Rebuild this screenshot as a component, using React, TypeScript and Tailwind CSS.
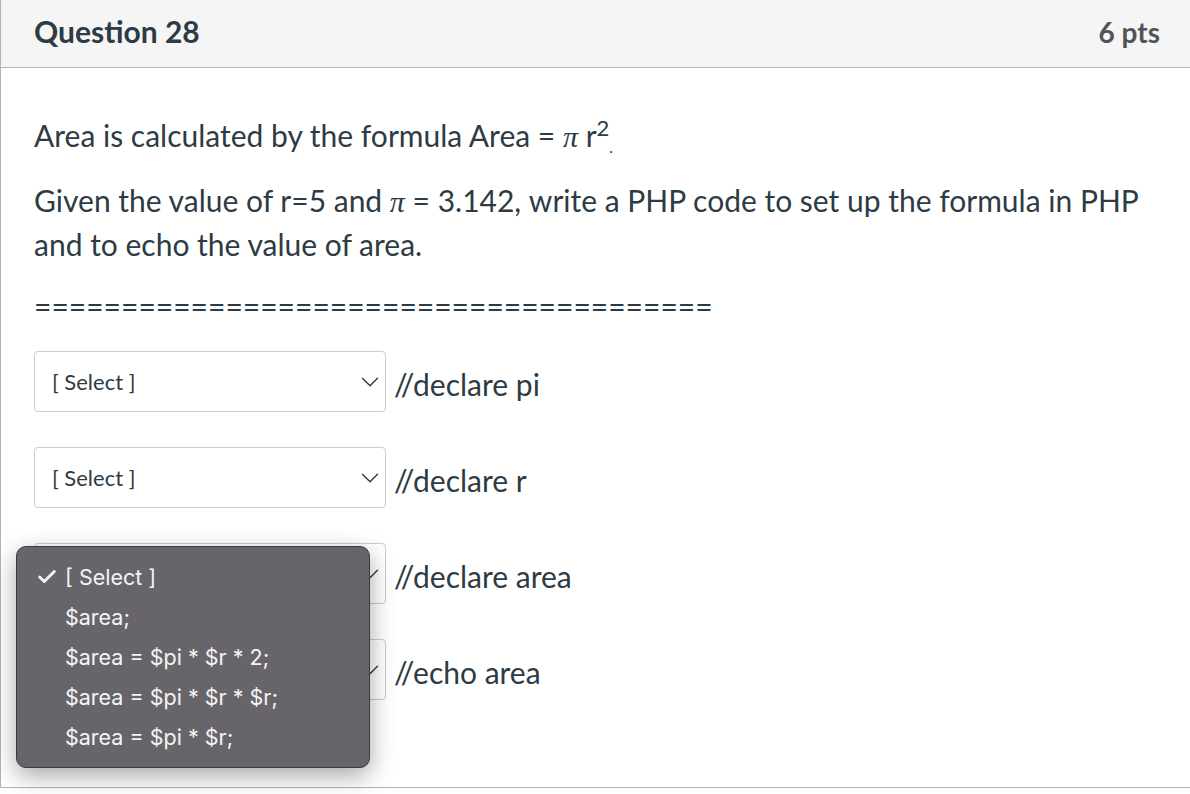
import { Check, ChevronDown } from 'lucide-react'

const ROWS = [
  { label: '//declare pi' },
  { label: '//declare r' },
  { label: '//declare area' },
  { label: '//echo area' },
]

const OPTIONS = ['[ Select ]', '$area;', '$area = $pi * $r * 2;', '$area = $pi * $r * $r;', '$area = $pi * $r;']

function SelectBox() {
  return (
    <div className="flex h-[61px] w-[352px] shrink-0 items-center justify-between rounded-[4px] border border-[#c7cdd1] bg-white pl-[17px]">
      <span className="text-[22px] leading-none text-[#2d3b45]">[ Select ]</span>
      <ChevronDown size={30} strokeWidth={1.1} className="text-[#2d3b45]" />
    </div>
  )
}

function OptionMenu() {
  return (
    <div className="absolute left-[16px] top-[546px] w-[354px] rounded-[10px] border border-[#3c3a3f] bg-[#67646a] py-[10px] shadow-[0_8px_24px_rgba(0,0,0,0.35)]">
      {OPTIONS.map((opt, i) => (
        <div
          key={opt}
          className="flex h-[40px] items-center text-[21.5px] text-[#f4f4f6] [font-family:Inter,'Liberation_Sans',sans-serif]"
        >
          <span className="flex w-[48px] justify-end pr-[7px]">
            {i === 0 && <Check size={22} strokeWidth={3.2} />}
          </span>
          <span>{opt}</span>
        </div>
      ))}
    </div>
  )
}

function Pi() {
  return <span className="font-['Liberation_Serif',serif] italic">π</span>
}

export default function App() {
  return (
    <div className="relative h-[794px] w-[1190px] overflow-hidden bg-white font-['Lato',sans-serif] text-[#2d3b45]">
      <div className="h-[788px] w-[1200px] border-b border-l border-[#b4b4b4]">
        <div className="flex h-[68px] items-center justify-between border-b border-[#b4b4b4] bg-[#f5f5f5] pb-[4px] pl-[33px] pr-[40px]">
          <h2 className="text-[30px] font-bold">Question 28</h2>
          <span className="text-[28px] font-bold text-[#505457]">6 pts</span>
        </div>

        <div className="px-[33px] pt-[45px] text-[30px] leading-[44px]">
          <p>
            Area is calculated by the formula Area = <Pi /> r<sup className="text-[22px]">2</sup>
            <span className="relative top-[6px] text-[16px]">.</span>
          </p>
          <p className="mt-[16px] leading-[43px]">
            Given the value of r=5 and <Pi /> = 3.142, write a PHP code to set up the formula in PHP and to echo the
            value of area.
          </p>
          <p className="mt-[18px]">{'='.repeat(39)}</p>

          <div className="mt-[23px] flex flex-col gap-[35px]">
            {ROWS.map((row) => (
              <div key={row.label} className="flex items-center">
                <SelectBox />
                <span className="ml-[8px] mt-[5px]">{row.label}</span>
              </div>
            ))}
          </div>
        </div>
      </div>

      <OptionMenu />
    </div>
  )
}
